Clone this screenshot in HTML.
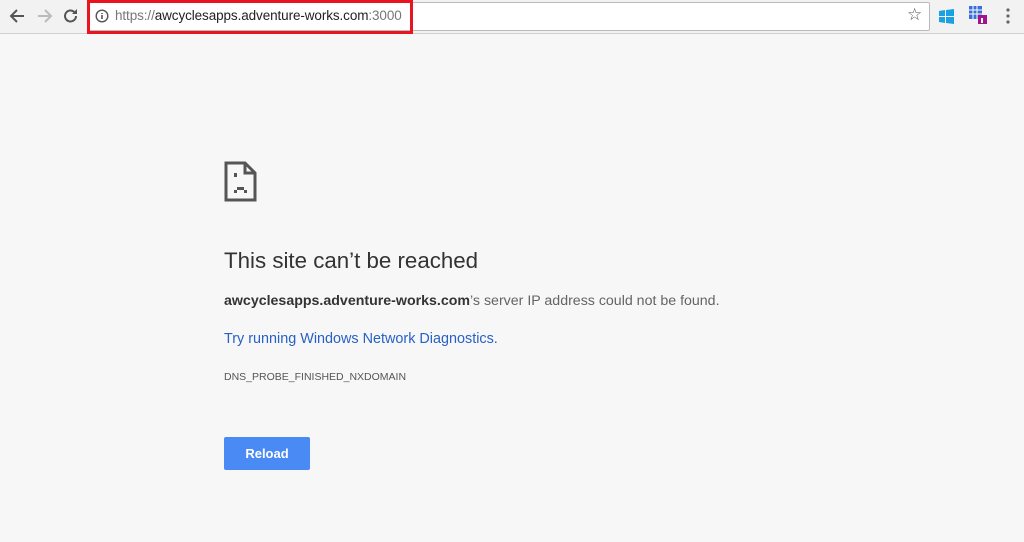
<!DOCTYPE html>
<html><head><style>
body{margin:0;width:1024px;height:542px;background:#f7f7f7;font-family:"Liberation Sans",sans-serif;position:relative;overflow:hidden}
.bar{position:absolute;left:0;top:0;width:1024px;height:33px;background:#f2f2f2;border-bottom:1px solid #d0d0d0}
.omni{position:absolute;left:88px;top:2px;width:840px;height:27px;background:#fff;border:1px solid #bbb;border-radius:2px}
.red{position:absolute;left:87px;top:0;width:320px;height:28px;border:3px solid #e8141e}
.url{position:absolute;left:115px;top:8px;font-size:13.5px;color:#777;letter-spacing:-0.1px}
.url b{font-weight:normal;color:#222}
.a{position:absolute;color:#333}
</style></head><body>
<div class="bar">
<svg style="position:absolute;left:8px;top:8px" width="18" height="16"><path d="M16 8H3M9 2L3 8l6 6" stroke="#555" stroke-width="2" fill="none"/></svg>
<svg style="position:absolute;left:36px;top:8px" width="18" height="16"><path d="M2 8h13M9 2l6 6-6 6" stroke="#bbb" stroke-width="2" fill="none"/></svg>
<svg style="position:absolute;left:63px;top:7px" width="16" height="18"><path d="M13 9a5.5 5.5 0 1 1-1.6-3.9" stroke="#555" stroke-width="2" fill="none"/><path d="M14 2v5h-5z" fill="#555"/></svg>
<div class="omni"></div>
<svg style="position:absolute;left:95px;top:9px" width="14" height="14"><circle cx="7" cy="7" r="5.8" stroke="#555" stroke-width="1.4" fill="none"/><path d="M7 6v4M7 4v1" stroke="#555" stroke-width="1.6"/></svg>
<div class="url">https://<b>awcyclesapps.adventure-works.com</b>:3000</div>
<div class="red"></div>
<div style="position:absolute;left:907px;top:5px;font-size:17px;color:#555">☆</div>
<svg style="position:absolute;left:939px;top:9px" width="15" height="15"><path d="M0 2l6-1v6H0zM7 1l8-1v7H7zM0 8h6v6l-6-1zM7 8h8v7l-8-1z" fill="#1ba1e2"/></svg>
<svg style="position:absolute;left:969px;top:6px" width="19" height="18"><rect x="0" y="0" width="13" height="13" fill="#3a6fd8"/><path d="M0 4h13M0 8h13M4 0v13M8 0v13" stroke="#fff" stroke-width="1"/><rect x="9" y="9" width="9" height="9" fill="#a0148c"/><rect x="12" y="12" width="2" height="5" fill="#fff"/></svg>
<svg style="position:absolute;left:1006px;top:8px" width="4" height="16"><circle cx="2" cy="2" r="1.6" fill="#666"/><circle cx="2" cy="8" r="1.6" fill="#666"/><circle cx="2" cy="14" r="1.6" fill="#666"/></svg>
</div>
<svg style="position:absolute;left:224px;top:161px" width="33" height="41"><path d="M2 2h19l10 10v27H2z" stroke="#555" stroke-width="3" fill="none"/><path d="M21 2v10h10" stroke="#555" stroke-width="3" fill="none"/><rect x="10" y="12" width="3" height="4" fill="#555"/><rect x="10" y="29" width="3" height="3" fill="#555"/><rect x="13" y="26" width="7" height="3" fill="#555"/><rect x="20" y="29" width="3" height="3" fill="#555"/></svg>
<div class="a" style="left:224px;top:248px;font-size:22.3px">This site can’t be reached</div>
<div class="a" style="left:224px;top:293px;font-size:14.2px;color:#646464"><b style="color:#333">awcyclesapps.adventure-works.com</b>’s server IP address could not be found.</div>
<div class="a" style="left:224px;top:331px;font-size:14.4px;color:#2761c8">Try running Windows Network Diagnostics.</div>
<div class="a" style="left:224px;top:371px;font-size:10.5px;color:#555">DNS_PROBE_FINISHED_NXDOMAIN</div>
<div style="position:absolute;left:224px;top:437px;width:86px;height:33px;background:#4a8af4;border-radius:2px;color:#fff;font-size:13px;font-weight:bold;text-align:center;line-height:33px">Reload</div>
</body></html>
